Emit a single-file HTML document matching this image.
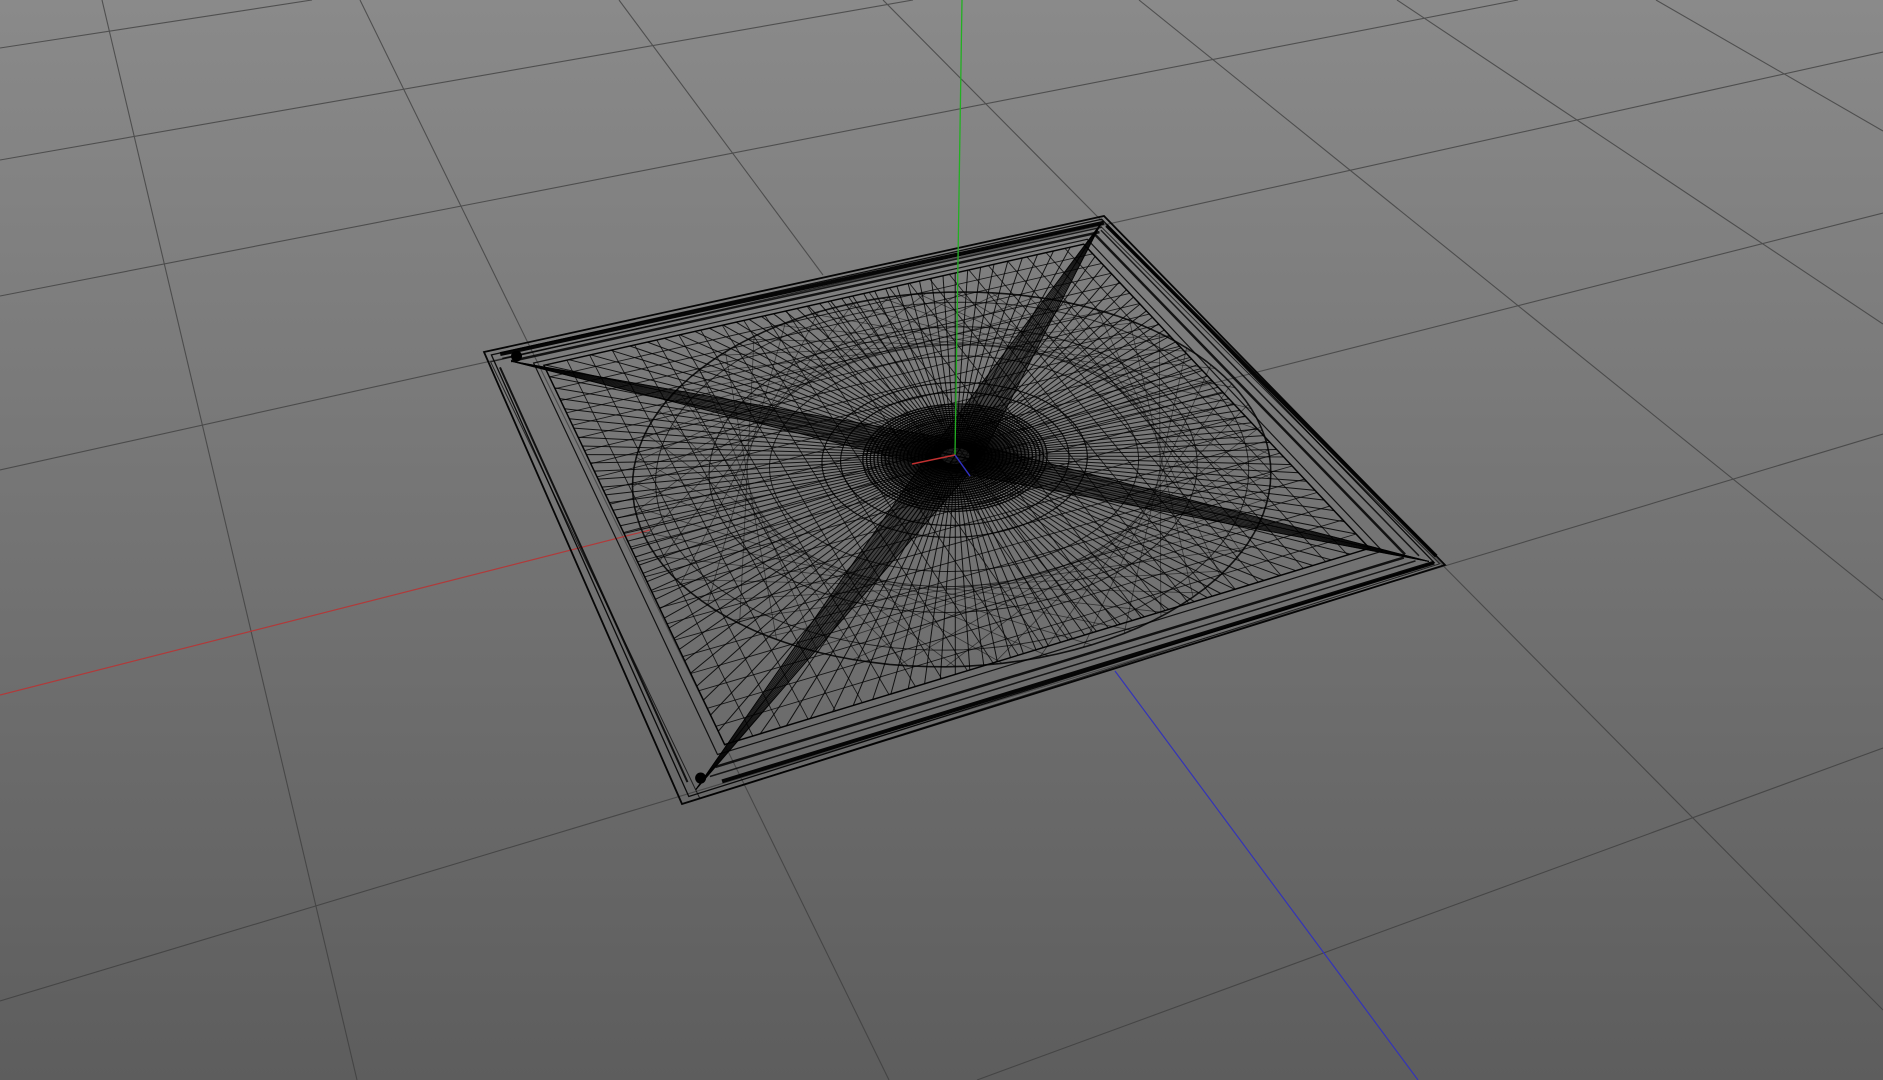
<!DOCTYPE html>
<html><head><meta charset="utf-8">
<style>
html,body{margin:0;padding:0;width:1883px;height:1080px;overflow:hidden;background:#737373}
svg{display:block}
</style></head><body>
<svg id="s" width="1883" height="1080" viewBox="0 0 1883 1080" xmlns="http://www.w3.org/2000/svg">
<defs><linearGradient id="bg" x1="0" y1="0" x2="0" y2="1">
<stop offset="0" stop-color="#8a8a8a"/><stop offset="1" stop-color="#5d5d5d"/></linearGradient></defs>
<rect width="1883" height="1080" fill="url(#bg)"/>
<g stroke="#3c3c3c" stroke-width="1.1" fill="none" opacity="0.75">
<line x1="0" y1="48" x2="312" y2="0"/>
<line x1="0" y1="160" x2="913" y2="0"/>
<line x1="0" y1="296" x2="1518" y2="0"/>
<line x1="0" y1="470" x2="1883" y2="52"/>
<line x1="1100" y1="412" x2="1883" y2="213"/>
<line x1="0" y1="1001" x2="1883" y2="434"/>
<line x1="977" y1="1080" x2="1883" y2="748"/>
<line x1="102" y1="0" x2="357" y2="1080"/>
<line x1="360" y1="0" x2="889" y2="1080"/>
<line x1="619" y1="0" x2="823" y2="275"/>
<line x1="883" y1="0" x2="1883" y2="1010"/>
<line x1="1139" y1="0" x2="1883" y2="600"/>
<line x1="1397" y1="0" x2="1883" y2="324"/>
<line x1="1656" y1="0" x2="1883" y2="131"/>
</g>
<line x1="0" y1="695" x2="650" y2="530" stroke="#b03a3a" stroke-width="1.2"/>
<line x1="1115" y1="671" x2="1418" y2="1080" stroke="#3333b8" stroke-width="1.2"/>
<g id="obj" fill="none" stroke="#000"></g>
<line x1="962" y1="0" x2="955" y2="455" stroke="#22b022" stroke-width="1.3"/>
<line x1="955" y1="455" x2="912" y2="464" stroke="#c03030" stroke-width="1.5"/>
<line x1="955" y1="455" x2="970" y2="476" stroke="#3030c0" stroke-width="1.5"/>
</svg>
<script>
(function(){
var P=[[484,352],[1104,216],[1445,565],[682,804]];
function H(P){var x0=P[0][0],y0=P[0][1],x1=P[1][0],y1=P[1][1],x2=P[2][0],y2=P[2][1],x3=P[3][0],y3=P[3][1];
var dx1=x1-x2,dx2=x3-x2,dx3=x0-x1+x2-x3,dy1=y1-y2,dy2=y3-y2,dy3=y0-y1+y2-y3;
var den=dx1*dy2-dx2*dy1;var g=(dx3*dy2-dx2*dy3)/den,h=(dx1*dy3-dx3*dy1)/den;
var a=x1-x0+g*x1,b=x3-x0+h*x3,d=y1-y0+g*y1,e=y3-y0+h*y3;
return function(u,v){var w=g*u+h*v+1;return [(a*u+b*v+x0)/w,(d*u+e*v+y0)/w];};}
var T=H(P);var g=document.getElementById('obj');var out=[];
// find unit coords of target center
var cu=0.5,cv=0.5,best=1e9;
for(var u=0.3;u<0.7;u+=0.002)for(var v=0.3;v<0.7;v+=0.002){var p=T(u,v);var dd=(p[0]-955)*(p[0]-955)+(p[1]-456)*(p[1]-456);if(dd<best){best=dd;cu=u;cv=v;}}
function pt(u,v){var p=T(u,v);return p[0].toFixed(1)+' '+p[1].toFixed(1);}
function line(u1,v1,u2,v2,w,o){out.push('<path d="M'+pt(u1,v1)+'L'+pt(u2,v2)+'" stroke-width="'+(w||1)+'" opacity="'+(o||0.85)+'"/>');}
function poly(pts,w,o,close,fill){var s='M';for(var i=0;i<pts.length;i++){s+=(i?'L':'')+pt(pts[i][0],pts[i][1]);}if(close)s+='Z';
out.push('<path d="'+s+'" stroke-width="'+(w||1)+'" opacity="'+(o||0.85)+'"'+(fill?' fill="'+fill+'"':'')+'/>');}
function circ(r,w,o){var pts=[];for(var i=0;i<=120;i++){var a=i/120*Math.PI*2;pts.push([cu+r*Math.cos(a),cv+r*Math.sin(a)]);}poly(pts,w,o);}
// outer frame
poly([[0,0],[1,0],[1,1],[0,1]],1.8,0.95,true);
poly([[0.008,0.012],[0.992,0.008],[0.99,0.99],[0.01,0.992]],1.3,0.9,true);
poly([[0.003,0.03],[0.98,0.02],[0.995,0.995],[0.02,1.0]],1,0.7,true);
var m=0.07;
poly([[m,m],[1-m,m],[1-m,1-m],[m,1-m]],1.5,0.9,true);
poly([[m-0.012,m-0.012],[1-m+0.012,m-0.012],[1-m+0.012,1-m+0.012],[m-0.012,1-m+0.012]],1.2,0.85,true);
// thick edges
line(0.02,0.015,0.99,0.02,4,0.95);line(0.03,0.04,0.97,0.045,2.5,0.85);line(0.02,0.028,0.98,0.032,1.5,0.8);
line(0.99,0.03,1.0,0.98,3.5,0.95);line(0.96,0.05,0.965,0.96,2.5,0.85);line(0.975,0.04,0.98,0.97,1.5,0.8);
line(0.05,0.985,0.99,0.99,4,0.95);line(0.05,0.96,0.96,0.965,2.5,0.85);line(0.04,0.972,0.97,0.977,1.5,0.8);
line(0.012,0.05,0.015,0.97,2,0.85);
// grid inside tray
var n=26;for(var i=0;i<=n;i++){var t=m+(1-2*m)*i/n;line(t,m,t,1-m,0.9,0.8);line(m,t,1-m,t,0.9,0.8);}
// circles
circ(0.43,1.6,0.85);circ(0.40,1,0.7);circ(0.33,1,0.75);circ(0.25,1,0.75);circ(0.18,1.2,0.85);circ(0.155,1.2,0.85);
for(var r=0.02;r<0.13;r+=0.005)circ(r,1.4,0.9);
// radial
var N=160;for(var i=0;i<N;i++){var a=i/N*Math.PI*2;var ca=Math.cos(a),sa=Math.sin(a);
var k=Math.min(((ca>0?1-m-cu:cu-m))/Math.max(Math.abs(ca),1e-6),((sa>0?1-m-cv:cv-m))/Math.max(Math.abs(sa),1e-6));
line(cu+0.02*ca,cv+0.02*sa,cu+k*ca,cv+k*sa,1,0.85);}
// chords
for(var i=0;i<48;i++){var a=i/48*Math.PI*2,b=a+Math.PI*0.55;line(cu+0.43*Math.cos(a),cv+0.43*Math.sin(a),cu+0.43*Math.cos(b),cv+0.43*Math.sin(b),0.8,0.55);}
// star arms
var C=[[0.03,0.04],[0.985,0.02],[0.985,0.985],[0.02,0.985]];
for(var j=0;j<4;j++){var q=C[j];var dx=cu-q[0],dy=cv-q[1];var L=Math.sqrt(dx*dx+dy*dy);var px=-dy/L*0.035,py=dx/L*0.035;
poly([q,[cu+px,cv+py],[cu-px,cv-py]],1,0.9,true,'rgba(0,0,0,0.5)');
for(var s=-1;s<=1;s+=0.2)line(q[0],q[1],cu+px*s,cv+py*s,0.7,0.75);}
var dk=[];for(var i=0;i<=60;i++){var a=i/60*Math.PI*2;dk.push([cu+0.1*Math.cos(a),cv+0.1*Math.sin(a)]);}
poly(dk,1,0.5,true,'rgba(0,0,0,0.5)');
out.push('<circle cx="'+T(0.04,0.03)[0]+'" cy="'+T(0.04,0.03)[1]+'" r="5" fill="#000"/>');
out.push('<circle cx="'+T(0.03,0.97)[0]+'" cy="'+T(0.03,0.97)[1]+'" r="5" fill="#000"/>');
g.innerHTML=out.join('');
})();
</script>
</body></html>
